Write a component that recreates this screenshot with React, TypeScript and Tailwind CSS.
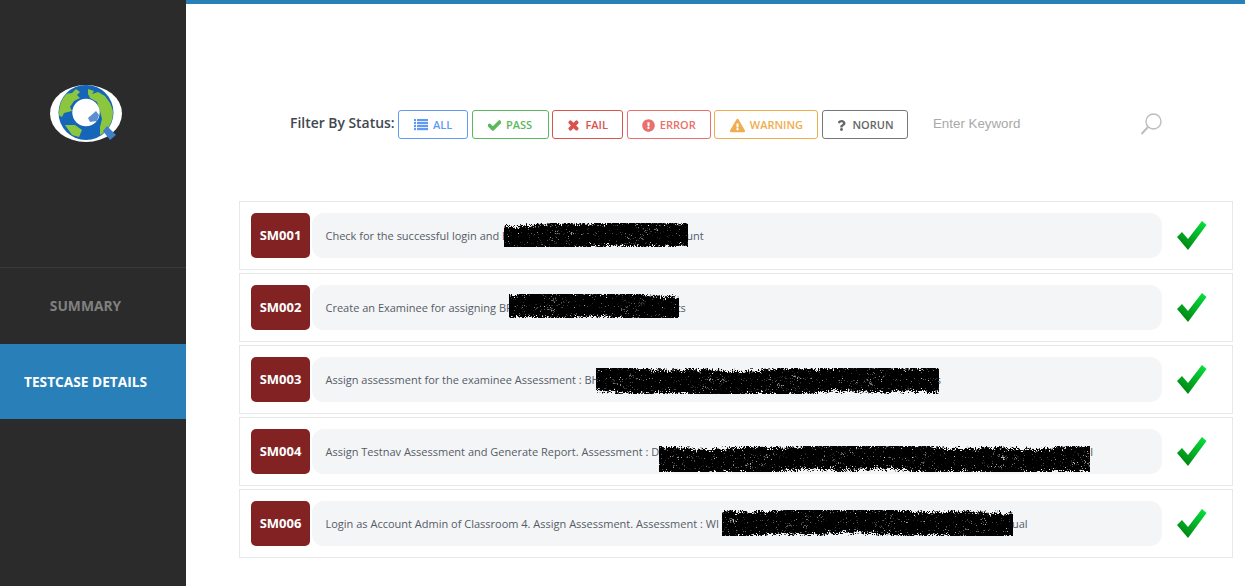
import { FaCheck, FaTimes, FaExclamationCircle, FaExclamationTriangle, FaQuestion } from "react-icons/fa";

const ListIcon = ({ className }: { className?: string }) => (
  <svg className={className} width="14" height="12" viewBox="0 0 14 12" fill="currentColor">
    {[0, 3, 6, 9].map((y) => (
      <g key={y}>
        <rect x="0" y={y} width="2" height="2.2" />
        <rect x="3" y={y} width="11" height="2.2" />
      </g>
    ))}
  </svg>
);

const filters = [
  { label: "ALL", icon: ListIcon, cls: "w-[70px] border-[#5f9bf5] text-[#5f9bf5]", iconCls: "" },
  { label: "PASS", icon: FaCheck, cls: "w-[77px] border-[#5cb85c] text-[#5cb85c]", iconCls: "text-[13px] [stroke-width:40px]" },
  { label: "FAIL", icon: FaTimes, cls: "w-[71px] border-[#d9534f] text-[#d9534f]", iconCls: "text-[13px] [stroke-width:50px]" },
  { label: "ERROR", icon: FaExclamationCircle, cls: "w-[84px] border-[#e9706c] text-[#e9706c]", iconCls: "text-[13px]" },
  { label: "WARNING", icon: FaExclamationTriangle, cls: "w-[104px] border-[#f0ad4e] text-[#f0ad4e]", iconCls: "text-[15px]" },
  { label: "NORUN", icon: FaQuestion, cls: "w-[86px] border-[#777777] text-[#666666]", iconCls: "text-[11px]" },
];

const rows = [
  { id: "SM001", before: "Check for the successful login and E", shift: -6, nudge: 2, width: 184, after: "unt", seed: 1, dy: 0 },
  { id: "SM002", before: "Create an Examinee for assigning BF", shift: -5, nudge: 2, width: 170, after: "ts", seed: 2, dy: -1 },
  { id: "SM003", before: "Assign assessment for the examinee Assessment : BH", shift: -7, nudge: 3, width: 343, after: "s", seed: 3, dy: 1 },
  { id: "SM004", before: "Assign Testnav Assessment and Generate Report. Assessment : D", shift: -6, nudge: 6, width: 431, after: "al", seed: 4, dy: 7 },
  { id: "SM006", before: "Login as Account Admin of Classroom 4. Assign Assessment. Assessment : WI", shift: 2, nudge: 1, width: 291, after: "ual", seed: 5, dy: -1 },
];

// three overlapping pen strokes with a slow wobble, the filter roughens the edges
function scribblePath(width: number, seed: number) {
  let d = "";
  for (let line = 0; line < 3; line++) {
    const base = 8 + line * 8;
    d += `M-8 ${base} `;
    for (let x = 0; x < width + 8; x += 3) {
      const wave = Math.sin(x / 47 + seed * 1.7) * 2.2 + Math.sin(x / 13 + seed + line) * 1.2;
      const jitter = Math.sin(x * 12.9898 + seed * 78.233 + line) * 1.4;
      d += `L${x} ${(base + wave + jitter).toFixed(1)} `;
    }
  }
  return d;
}

type ScribbleProps = { width: number; seed: number; shift: number; nudge: number; dy: number };

function Scribble({ width, seed, shift, nudge, dy }: ScribbleProps) {
  return (
    <span className="relative inline-block h-[18px] shrink-0" style={{ width, marginLeft: shift }}>
      <svg className="absolute" style={{ top: -10 + dy, left: nudge }} width={width} height={38} viewBox={`0 0 ${width} 38`}>
        <defs>
          <filter id={`rough${seed}`} x="0" y="0" width="100%" height="100%" colorInterpolationFilters="sRGB">
            <feTurbulence type="fractalNoise" baseFrequency="0.8" numOctaves="2" seed={seed} result="n" />
            <feDisplacementMap in="SourceGraphic" in2="n" scale="11" xChannelSelector="R" yChannelSelector="G" result="d" />
            <feGaussianBlur in="d" stdDeviation="0.5" result="b" />
            <feTurbulence type="fractalNoise" baseFrequency="0.9" numOctaves="1" seed={seed + 9} />
            <feColorMatrix values="0 0 0 0 0  0 0 0 0 0  0 0 0 0 0  0 0 0 -6 5" result="holes" />
            <feComposite in="b" in2="holes" operator="in" />
          </filter>
        </defs>
        <path d={scribblePath(width, seed)} transform="translate(0 3)" fill="none" stroke="#000" strokeWidth="8.5" filter={`url(#rough${seed})`} />
      </svg>
    </span>
  );
}

function Logo() {
  return (
    <svg width="72" height="57" viewBox="0 0 72 57">
      <defs>
        <clipPath id="globe">
          <circle cx="36" cy="27.5" r="27" />
        </clipPath>
      </defs>
      <ellipse cx="36" cy="28.5" rx="36" ry="28.5" fill="#fff" />
      <circle cx="36" cy="27.5" r="27.5" fill="#1565b8" />
      <g clipPath="url(#globe)" fill="#8cc63f">
        <path d="M9 14 L14 9 L22 8 L26 4 L30 7 L27 10 L30 13 L24 16 L20 22 L22 26 L14 28 L12 32 L8 30 Z" />
        <path d="M38 4 L44 6 L42 9 L48 7 L55 11 L60 18 L64 28 L62 40 L54 49 L50 50 L50 42 L52 34 L50 26 L47 17 L40 13 L38 9 Z" />
        <path d="M15 40 L25 40 L32 45 L29 52 L22 50 Z" />
      </g>
      <circle cx="36" cy="27.5" r="13.7" fill="#fff" />
      <path d="M38 33 L46 26 L49 30 L47 36 L40 37 Z" fill="#5b8fd0" />
      <path d="M53 46 L57 41 L66 50 L60 55 Z" fill="#3f7fc8" />
    </svg>
  );
}

function BigCheck() {
  return (
    <svg width="32" height="32" viewBox="0 0 32 32">
      <defs>
        <linearGradient id="tick" x1="0.9" y1="0" x2="0.3" y2="1">
          <stop offset="0" stopColor="#08e040" />
          <stop offset="1" stopColor="#008410" />
        </linearGradient>
      </defs>
      <path d="M1 17 L6 12 L12 19 L26 1 L30.5 5 L12 30 Z" fill="url(#tick)" />
    </svg>
  );
}

export default function App() {
  return (
    <div className="flex h-[586px] w-[1245px] overflow-hidden bg-white font-['Open_Sans',sans-serif]">
      {/* Sidebar */}
      <aside className="flex w-[186px] shrink-0 flex-col bg-[#2b2b2b]">
        <div className="flex h-[268px] justify-center border-b border-[#3a3a3a] pr-[15px] pt-[85px]">
          <div className="h-[57px]">
            <Logo />
          </div>
        </div>
        <div className="flex h-[76px] items-center justify-center pr-[15px] text-[13.8px] font-bold text-[#808080]">SUMMARY</div>
        <div className="flex h-[75px] items-center justify-center bg-[#2980b9] pr-[15px] pt-[1px] text-[13.7px] font-bold text-white">
          TESTCASE DETAILS
        </div>
      </aside>

      {/* Main */}
      <main className="flex min-w-0 flex-1 flex-col border-t-4 border-[#2980b9]">
        <div className="flex h-[197px] items-start pl-[104px] pt-[106px]">
          <span className="mr-[3px] mt-[3px] w-[105px] whitespace-nowrap text-[13.9px] font-semibold text-[#3f4750]">Filter By Status:</span>
          <div className="flex gap-[3.6px]">
            {filters.map((f) => {
              const Icon = f.icon;
              return (
                <button
                  key={f.label}
                  className={`flex h-[29px] items-center justify-center gap-[5px] rounded-[3px] border bg-white pt-[1px] text-[11px] font-semibold ${f.cls}`}
                >
                  <Icon className={f.iconCls} />
                  {f.label}
                </button>
              );
            })}
          </div>
          <span className="ml-[25px] mt-[5px] font-['Liberation_Sans',sans-serif] text-[13.33px] leading-[17px] text-[#a9a9a9]">
            Enter Keyword
          </span>
          <svg className="ml-[120px] mt-[2px]" width="24" height="24" viewBox="0 0 24 24" fill="none" stroke="#bdbdbd">
            <circle cx="13.5" cy="9.5" r="7.5" strokeWidth="1.4" />
            <path d="M8 15 L1.5 22" strokeWidth="2" />
          </svg>
        </div>

        <div className="flex flex-col gap-[3px] pl-[53px] pr-[12px]">
          {rows.map((r) => (
            <div key={r.id} className="flex h-[69px] items-center border border-[#e8e8e8] pl-[11px]">
              <div className="flex h-[45px] w-[59px] shrink-0 items-center justify-center rounded-[5px] bg-[#822222] text-[13px] font-bold text-white">
                {r.id}
              </div>
              <div className="ml-[2px] flex h-[45px] w-[850px] items-center rounded-[12px] bg-[#f4f5f7] pl-[13.5px] pt-[1px] text-[11px] text-[#555c66]">
                <span className="whitespace-nowrap">{r.before}</span>
                <Scribble width={r.width} seed={r.seed} shift={r.shift} nudge={r.nudge} dy={r.dy} />
                <span className="whitespace-nowrap">{r.after}</span>
              </div>
              <div className="ml-[14px]">
                <BigCheck />
              </div>
            </div>
          ))}
        </div>
      </main>
    </div>
  );
}
